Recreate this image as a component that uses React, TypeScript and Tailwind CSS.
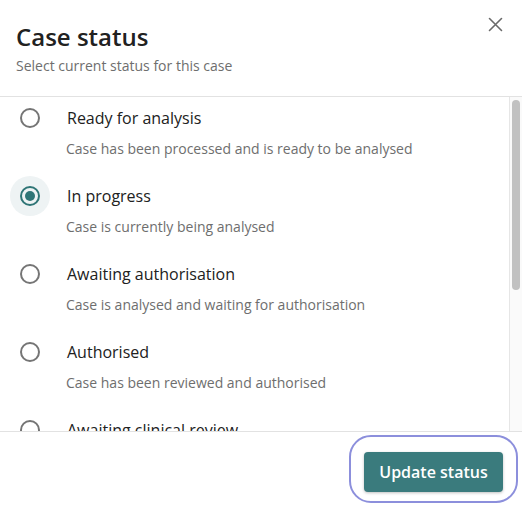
import React from "react";

const items = [
  { label: "Ready for analysis", desc: "Case has been processed and is ready to be analysed" },
  { label: "In progress", desc: "Case is currently being analysed", selected: true },
  { label: "Awaiting authorisation", desc: "Case is analysed and waiting for authorisation" },
  { label: "Authorised", desc: "Case has been reviewed and authorised" },
  { label: "Awaiting clinical review", desc: "Case is waiting for clinical review" },
];

export default function App() {
  return (
    <div className="relative flex h-[511px] w-[522px] flex-col overflow-hidden bg-white font-['Open_Sans',sans-serif]">
      <div className="h-[96px] shrink-0 px-4 pt-[21px]">
        <h2 className="text-[24px] font-semibold leading-[32px] text-[#212121]">Case status</h2>
        <p className="mt-[3px] text-[14px] leading-[20px] text-[#6e6e6e]">Select current status for this case</p>
      </div>
      <button className="absolute right-[19px] top-[17px] flex h-[15px] w-[15px] items-center justify-center">
        <svg width="15" height="15" viewBox="0 0 15 15" fill="none" stroke="#6a6a6a" strokeWidth="1.6" strokeLinecap="round">
          <path d="M1.5 1.5 L13.5 13.5 M13.5 1.5 L1.5 13.5" />
        </svg>
      </button>
      <div className="flex h-[336px] shrink-0 overflow-hidden border-y border-[#e2e2e2]">
        <div className="flex-1 overflow-hidden pt-[1px]">
          {items.map((it) => (
            <div key={it.label} className="h-[78px] shrink-0">
              <div className="flex h-[40px] items-center">
                <div
                  className={`ml-[10px] flex h-[40px] w-[40px] items-center justify-center rounded-full ${
                    it.selected ? "bg-[#eef3f4]" : ""
                  }`}
                >
                  {it.selected ? (
                    <div className="flex h-[20px] w-[20px] items-center justify-center rounded-full border-2 border-[#2f7576]">
                      <div className="h-[10px] w-[10px] rounded-full bg-[#2f7576]" />
                    </div>
                  ) : (
                    <div className="h-[20px] w-[20px] rounded-full border-2 border-[#757575]" />
                  )}
                </div>
                <span className="ml-[17px] text-[16px] leading-[24px] text-[#212121]">{it.label}</span>
              </div>
              <p className="mt-[1px] pl-[66px] text-[14px] leading-[20px] text-[#6e6e6e]">{it.desc}</p>
            </div>
          ))}
        </div>
        <div className="w-[13px] shrink-0 border-l border-[#e6e6e6] bg-[#fafafa] pl-[2px] pt-[3px]">
          <div className="h-[190px] w-[8px] rounded-full bg-[#c1c1c1]" />
        </div>
      </div>
      <div className="flex flex-1 items-start justify-end pr-[19px] pt-[20px]">
        <div className="relative h-[40px]">
          <div className="pointer-events-none absolute -bottom-[11px] -left-[15px] -right-[15px] -top-[17px] rounded-[22px] border-2 border-[#8c8fdc]" />
          <button className="h-[40px] w-[139px] rounded-[4px] bg-[#3a7b7d] text-[16px] font-semibold text-white shadow-[0_1px_3px_rgba(0,0,0,0.25)]">
            Update status
          </button>
        </div>
      </div>
    </div>
  );
}
